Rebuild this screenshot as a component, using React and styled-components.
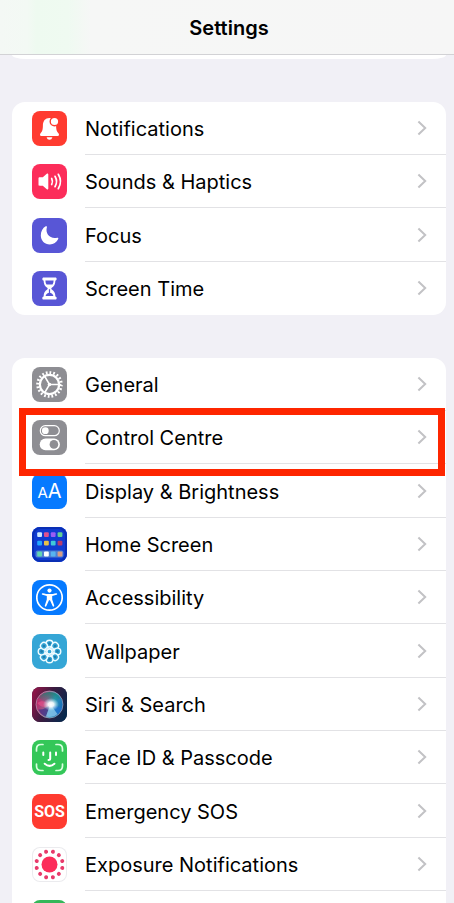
import React from 'react'
import styled, { createGlobalStyle } from 'styled-components'

const GlobalStyle = createGlobalStyle`
    * {
        box-sizing: border-box;
    }
    body {
        margin: 0;
        background: #f1f0f6;
        color: #000;
        font-family: Inter, "Liberation Sans", sans-serif;
    }
`
const Screen = styled.div`
    display: flex;
    flex-direction: column;
    height: 100vh;
`
const Header = styled.header`
    flex: none;
    padding: 15px 0 13px;
    border-bottom: 1px solid #d2d2d5;
    background: linear-gradient(90deg, #f4f8f5 0%, #f3f9f4 6%, #eefaf0 8%, #effaf1 15%, #f6f7f6 20%, #f6f6f6 100%);
`
const Title = styled.h1`
    margin: 0 0 0 4px;
    font-size: 20px;
    line-height: 26px;
    font-weight: 600;
    text-align: center;
`
const Scroller = styled.main`
    flex: 1;
    overflow-y: auto;
    scrollbar-width: none;
    display: flex;
    flex-direction: column;
    gap: 43px;
    padding: 0 8px 0 12px;
`
const GroupEnd = styled.div`
    flex: none;
    height: 4px;
    background: #fff;
    border-radius: 0 0 14px 14px / 0 0 4px 4px;
`
const Group = styled.ul`
    flex: none;
    display: grid;
    grid-auto-rows: 53px 53px 54px;
    margin: 0;
    padding: 0;
    list-style: none;
    background: #fff;
    border-radius: 13px;
`
const Item = styled.li`
    position: relative;
    display: grid;
`
const Row = styled.a`
    display: flex;
    align-items: stretch;
    gap: 18px;
    padding-left: 20px;
    color: inherit;
    text-decoration: none;
`
const Tile = styled.span`
    flex: none;
    align-self: center;
    display: flex;
    align-items: ${p => p.$baseline ? 'baseline' : 'center'};
    justify-content: center;
    width: 35px;
    height: 35px;
    border-radius: 8px;
    overflow: hidden;
    background: ${p => p.$color};
    color: #fff;
    box-shadow: ${p => p.$outlined ? 'inset 0 0 0 1px #ebebee' : 'none'};
`
const RowBody = styled.span`
    flex: 1;
    display: flex;
    align-items: center;
    justify-content: space-between;
    padding-right: 19px;
    border-bottom: 1px solid ${p => p.$last ? 'transparent' : '#e2e2e5'};
`
const Label = styled.span`
    padding-top: 2px;
    font-size: 20px;
    line-height: 26px;
`
const Highlight = styled.span`
    position: absolute;
    z-index: 1;
    top: -3px;
    right: 1px;
    bottom: -12px;
    left: 7px;
    border: 7px solid #fe2600;
    pointer-events: none;
`
const SmallA = styled.span`
    font-size: 15px;
    line-height: 35px;
`
const LargeA = styled.span`
    font-size: 20px;
    line-height: 35px;
`
const Sos = styled.span`
    font-family: Roboto, sans-serif;
    font-size: 16px;
    font-weight: 700;
`

const Chevron = () => (
    <svg width="10" height="16" viewBox="0 0 10 16" fill="none" stroke="#c2c2c5" strokeWidth="2" aria-hidden="true">
        <path d="M1.4 1.5 8.2 8l-6.8 6.5" />
    </svg>
)

const Icon = ({ children }) => (
    <svg width="35" height="35" viewBox="0 0 35 35" fill="none" aria-hidden="true">{children}</svg>
)

const Bell = () => (
    <Icon>
        <path fill="#fff" d="M17.500 7c-4.300 0-6.600 3.200-6.600 7.300 0 5-.8 6.300-2.300 8-.9 1-.9 2.700.7 2.700h16.400c1.600 0 1.600-1.700.7-2.700-1.500-1.700-2.300-3-2.300-8C24.100 10.200 21.800 7 17.500 7zM14.600 26.200h5.800c-.5 1.700-1.500 2.500-2.900 2.500s-2.400-.8-2.900-2.500z" />
        <circle cx="22.5" cy="10.5" r="4.3" fill="#fff" stroke="#ff3b30" strokeWidth="1.400" />
    </Icon>
)

const Speaker = () => (
    <Icon>
        <path fill="#fff" d="M6.500 14.500c0-.8.4-1.200 1.200-1.200h3.100l4-3.500c.7-.6 1.500-.4 1.500.6v14.200c0 1-.8 1.200-1.500.6l-4-3.500H7.700c-.8 0-1.200-.4-1.200-1.200z" />
        <path stroke="#fff" strokeWidth="1.700" strokeLinecap="round" d="M19.700 14.500c1 1.900 1 4.100 0 6M23 12.300c1.900 3.200 1.900 7.200 0 10.400M26.300 10.300c2.700 4.500 2.700 9.900 0 14.400" />
    </Icon>
)

const Moon = () => (
    <Icon>
        <path fill="#fff" d="M13.700 8.300c.8-.4 1.500.1 1.200 1-1.900 6.200 3 12 10.300 10.400.9-.2 1.500.5 1 1.300-1.600 3.300-4.600 5.500-8.400 5.500-5.100 0-9-4-9-9 0-4 1.900-7.500 4.900-9.200z" />
    </Icon>
)

const Hourglass = () => (
    <Icon>
        <path fill="#fff" d="M11.600 6.500h11.800c1.700 0 1.700 2.900 0 3.100-.1 4-1.200 5.600-3.600 7.100-.7.5-.7 1.200 0 1.700 2.400 1.500 3.500 3.200 3.600 7 1.700.2 1.700 3.100 0 3.100H11.600c-1.700 0-1.700-2.900 0-3.100.1-3.800 1.200-5.500 3.600-7 .7-.5.7-1.200 0-1.700-2.400-1.500-3.500-3.100-3.600-7.100-1.700-.2-1.700-3.100 0-3.100z" />
        <path fill="#5856d6" d="M13.400 9.600h8.200c0 1.600-.4 2.900-1.100 3.900h-6c-.7-1-1.100-2.300-1.100-3.900zM16.900 18.300h1.200v3.400c1.900.6 3 1.700 3.300 3.400h-7.800c.3-1.700 1.400-2.800 3.300-3.400z" />
    </Icon>
)

const Gear = () => (
    <Icon>
        <circle cx="17.5" cy="17.5" r="11.9" stroke="#fff" strokeWidth="2.8" pathLength="80" strokeDasharray="1.9 2.1" />
        <circle cx="17.5" cy="17.5" r="9.6" stroke="#fff" strokeWidth="2.2" />
        <path stroke="#fff" strokeWidth="1.5" d="M17.500 17.500h9M17.500 17.500l-4.700-8M17.500 17.500l-4.700 8" />
        <circle cx="17.5" cy="17.5" r="1.8" fill="#fff" />
    </Icon>
)

const Toggles = () => (
    <Icon>
        <rect x="8.3" y="5.7" width="19" height="10" rx="5" stroke="#fff" strokeWidth="1.2" />
        <circle cx="13.3" cy="10.7" r="3.4" fill="#fff" />
        <rect x="7.7" y="18.6" width="20.2" height="11.6" rx="5.8" fill="#fff" />
        <circle cx="21.9" cy="24.4" r="4.3" fill="#8e8e93" />
    </Icon>
)

const appDots = [
    ['#cbe8ff', '#e0508f', '#9a5cf5', '#62cf94'],
    ['#23a6ff', '#e8c04a', '#3fc8d8', '#b53c6e'],
    ['#62d5b4', '#ffffff', '#58b4f0', '#d99c86']
]

const Apps = () => (
    <Icon>
        <rect width="35" height="35" fill="#0f3bd0" />
        <rect x="1" y="1" width="33" height="33" rx="7.500" stroke="#0a2fb4" strokeWidth="2" />
        <rect x="3.5" y="23.5" width="28" height="7" rx="2" fill="#4f7fd2" />
        {appDots.map((line, y) => line.map((color, x) => (
            <rect key={`${x}-${y}`} x={5.2 + x * 6.8} y={[5.2, 13.7, 24.6][y]} width="4.8" height="4.8" rx="1" fill={color} />
        )))}
    </Icon>
)

const Person = () => (
    <Icon>
        <circle cx="17.5" cy="17.5" r="12.7" stroke="#fff" strokeWidth="1.7" />
        <circle cx="17.5" cy="10.6" r="2.1" fill="#fff" />
        <path fill="#fff" d="M10.800 13.200c2.200.5 4.200.9 6.700.9s4.500-.4 6.700-.9c1.200-.2 1.400 1.200.3 1.500l-4.300 1.200v3.600l2 6.100c.3 1.100-1.100 1.600-1.600.5l-2.600-5.800h-1l-2.600 5.800c-.5 1.100-1.900.6-1.600-.5l2-6.100v-3.600l-4.300-1.200c-1.100-.3-.9-1.700.3-1.500z" />
    </Icon>
)

const petals = [0, 45, 90, 135, 180, 225, 270, 315]

const Flower = () => (
    <Icon>
        {petals.map(angle => (
            <g key={angle} transform={`rotate(${angle} 17.5 17.5)`}>
                <circle cx="17.5" cy="9.6" r="3.4" fill="#35a6d6" stroke="#effcff" strokeWidth="1.4" />
                <path stroke="#effcff" strokeWidth="1.1" d="M15 12.200l2.500 3 2.500-3" />
                <circle cx="17.5" cy="9.6" r="1.4" fill="#1f7fae" />
            </g>
        ))}
        <circle cx="17.5" cy="17.5" r="2.4" fill="#35a6d6" stroke="#effcff" strokeWidth="1.1" />
    </Icon>
)

const Siri = () => (
    <Icon>
        <defs>
            <linearGradient id="siri-back" x1="0" y1=".3" x2="1" y2=".7">
                <stop offset="0" stopColor="#8c1648" />
                <stop offset=".45" stopColor="#3a1c40" />
                <stop offset="1" stopColor="#05284c" />
            </linearGradient>
            <linearGradient id="siri-orb" x1="0" y1=".35" x2="1" y2=".65">
                <stop offset="0" stopColor="#c02466" />
                <stop offset=".38" stopColor="#96608c" />
                <stop offset=".62" stopColor="#2f9dba" />
                <stop offset="1" stopColor="#1466b8" />
            </linearGradient>
            <linearGradient id="siri-top" x1="0" y1="0" x2="0" y2="1">
                <stop offset="0" stopColor="#12806f" stopOpacity=".8" />
                <stop offset="1" stopColor="#12806f" stopOpacity="0" />
            </linearGradient>
            <radialGradient id="siri-glow">
                <stop offset="0" stopColor="#fff" />
                <stop offset=".35" stopColor="#fff" stopOpacity=".9" />
                <stop offset="1" stopColor="#b4e6f5" stopOpacity="0" />
            </radialGradient>
        </defs>
        <rect width="35" height="35" fill="url(#siri-back)" />
        <circle cx="17.5" cy="17.5" r="13.5" fill="url(#siri-orb)" />
        <path fill="url(#siri-top)" d="M6.500 11a13 13 0 0 1 22 0l-5 4h-10z" />
        <path fill="#f0508a" fillOpacity=".6" d="M5.500 16c4-3 8-2 13 2-4 3-10 3-13-2z" />
        <path fill="#3a2c86" fillOpacity=".7" d="M6.500 22.500c4 .5 8-1 11.500-5l-4 12c-3.500-1-6-3.500-7.500-7z" />
        <path fill="#8fc6f0" fillOpacity=".75" d="m18.500 17 7 10c-3 2.500-8 3.500-11.500 2.500z" />
        <path fill="#1f6fd0" fillOpacity=".7" d="m18.500 17 11.500 4c-.6 2.500-2 4.500-4.500 6z" />
        <ellipse cx="19" cy="17.5" rx="8" ry="6.500" fill="url(#siri-glow)" />
        <circle cx="17.5" cy="17.5" r="13.5" stroke="#b5b0c4" strokeOpacity=".6" />
    </Icon>
)

const Face = () => (
    <Icon>
        <path stroke="#d9ffe0" strokeWidth="1.7" strokeLinecap="round" d="M4.500 11V9c0-3 1.500-4.500 4.500-4.500h2M24 4.500h2c3 0 4.500 1.500 4.500 4.500v2M30.500 24v2c0 3-1.500 4.500-4.500 4.500h-2M11 30.500H9c-3 0-4.500-1.500-4.500-4.500v-2" />
        <path stroke="#fff" strokeWidth="2" strokeLinecap="round" d="M11.300 12.500v2.500M24 12.500v2.500M18.200 12.500v6c0 1-.5 1.500-1.700 1.500M12.700 23.700c3 2.600 6.800 2.600 9.700 0" />
    </Icon>
)

const Exposure = () => (
    <Icon>
        <circle cx="17.5" cy="17.5" r="8" fill="#fc2d5a" />
        {[...Array(12)].map((_, i) => (
            <circle key={i} cx="17.5" cy="4.3" r="2" fill="#e83a6b" transform={`rotate(${15 + i * 30} 17.5 17.5)`} />
        ))}
    </Icon>
)

const Battery = () => (
    <Icon>
        <rect x="5" y="12" width="22" height="11" rx="3" fill="#fff" />
        <path fill="#fff" d="M28.500 15.500c2 .6 2 3.400 0 4z" />
    </Icon>
)

const alerts = [
    { label: 'Notifications', color: '#ff3b30', icon: <Bell /> },
    { label: 'Sounds & Haptics', color: '#fc2d5a', icon: <Speaker /> },
    { label: 'Focus', color: '#5856d6', icon: <Moon /> },
    { label: 'Screen Time', color: '#5856d6', icon: <Hourglass /> }
]

const device = [
    { label: 'General', color: '#8e8e93', icon: <Gear /> },
    { label: 'Control Centre', color: '#8e8e93', icon: <Toggles />, highlighted: true },
    { label: 'Display & Brightness', color: '#067aff', icon: <><SmallA>A</SmallA><LargeA>A</LargeA></>, baseline: true },
    { label: 'Home Screen', color: '#0f3bd0', icon: <Apps /> },
    { label: 'Accessibility', color: '#067aff', icon: <Person /> },
    { label: 'Wallpaper', color: '#35a6d6', icon: <Flower /> },
    { label: 'Siri & Search', color: '#2b1d3f', icon: <Siri /> },
    { label: 'Face ID & Passcode', color: '#34c759', icon: <Face /> },
    { label: 'Emergency SOS', color: '#ff3b30', icon: <Sos>SOS</Sos> },
    { label: 'Exposure Notifications', color: '#fff', icon: <Exposure />, outlined: true },
    { name: 'Battery', color: '#34b759', icon: <Battery /> }
]

const SettingsGroup = ({ items }) => (
    <Group>
        {items.map((item, i) => (
            <Item key={item.label || item.name}>
                <Row href="#" aria-label={item.name}>
                    <Tile $color={item.color} $baseline={item.baseline} $outlined={item.outlined} aria-hidden="true">
                        {item.icon}
                    </Tile>
                    <RowBody $last={i === items.length - 1}>
                        <Label>{item.label}</Label>
                        <Chevron />
                    </RowBody>
                </Row>
                {item.highlighted && <Highlight />}
            </Item>
        ))}
    </Group>
)

class App extends React.Component {
    render() {
        return (
            <React.Fragment>
                <GlobalStyle />
                <Screen>
                    <Header>
                        <Title>Settings</Title>
                    </Header>
                    <Scroller>
                        <GroupEnd />
                        <SettingsGroup items={alerts} />
                        <SettingsGroup items={device} />
                    </Scroller>
                </Screen>
            </React.Fragment>
        )
    }
}
export default App
